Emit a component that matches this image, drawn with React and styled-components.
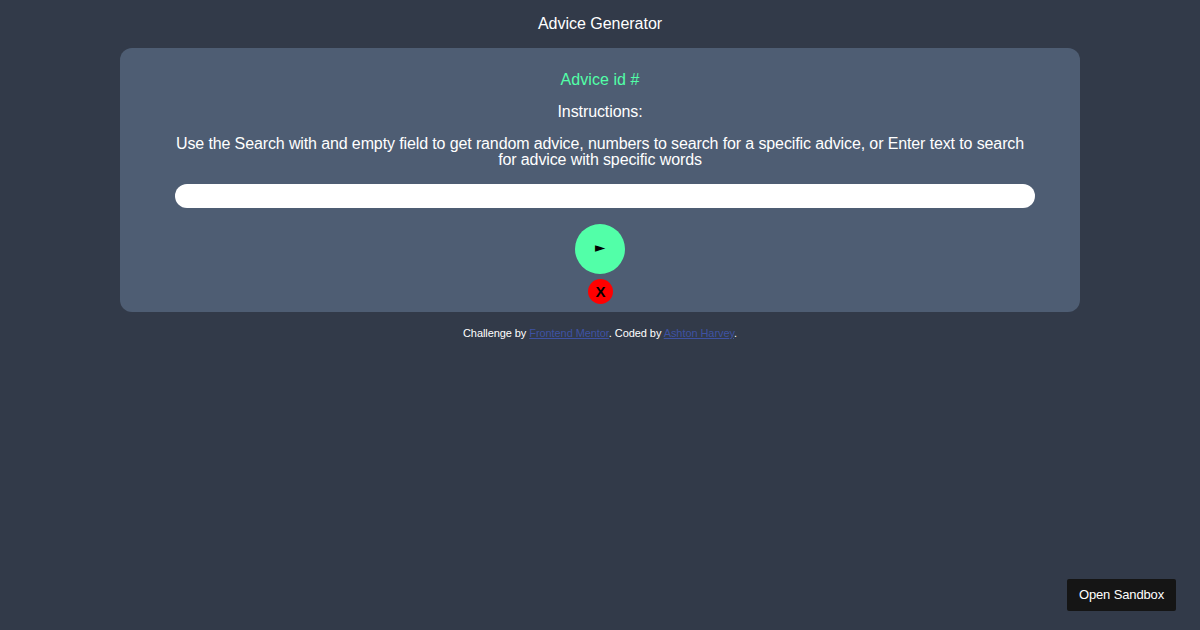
import React from "react";
import styled, { createGlobalStyle } from "styled-components";

const Global = createGlobalStyle`
  html, body { margin: 0; padding: 0; }
  body {
    background: hsl(217, 19%, 24%);
    color: #fff;
    font-family: "Liberation Sans", Arial, sans-serif;
    font-size: 16px;
    min-height: 630px;
  }
`;

const Page = styled.main`
  display: flex;
  flex-direction: column;
  align-items: center;
  min-height: 630px;
  padding-top: 15px;
  box-sizing: border-box;
`;

const Title = styled.h1`
  margin: 0 0 15px;
  font-size: 16px;
  line-height: 18px;
  font-weight: 400;
  letter-spacing: -0.02px;
`;

const Card = styled.section`
  width: 960px;
  height: 264px;
  box-sizing: border-box;
  padding: 23px 55px 0;
  border-radius: 12px;
  background: hsl(217, 19%, 38%);
  display: flex;
  flex-direction: column;
  align-items: stretch;
  text-align: center;
`;

const Line = styled.p`
  margin: 0 0 14px;
  font-size: 16px;
  line-height: 18px;
  letter-spacing: ${(p) => p.$spacing}px;
  color: ${(p) => (p.$accent ? "hsl(150, 100%, 66%)" : "#fff")};
`;

const Instructions = styled.p`
  margin: 1px 0 16px;
  font-size: 16px;
  line-height: 16px;
  letter-spacing: -0.12px;
`;

const SearchInput = styled.input`
  display: block;
  width: 860px;
  height: 24px;
  box-sizing: border-box;
  border: 0;
  border-radius: 12px;
  background: #fff;
  padding: 0 12px;
  margin-bottom: 16px;
`;

const RoundButton = styled.button`
  display: flex;
  align-items: center;
  justify-content: center;
  align-self: center;
  flex: none;
  border: 0;
  padding: 0 0 ${(p) => p.$lift}px;
  border-radius: 50%;
  color: #000;
  font-family: ${(p) => p.$family}, sans-serif;
  width: ${(p) => p.$size}px;
  height: ${(p) => p.$size}px;
  background: ${(p) => p.$bg};
  font-size: ${(p) => p.$font}px;
  font-weight: ${(p) => p.$weight};
`;

const ClearRow = styled.div`
  margin-top: 5px;
  display: flex;
  justify-content: center;
  padding-left: 1px;
`;

const Footer = styled.footer`
  margin-top: 15px;
  font-size: 11px;
  line-height: 13px;
  text-align: center;
  letter-spacing: -0.075px;
`;

const Link = styled.a`
  color: hsl(228, 45%, 44%);
  text-decoration: underline;
`;

const Sandbox = styled.button`
  position: absolute;
  right: 24px;
  bottom: 19px;
  width: 109px;
  height: 32px;
  border: 0;
  padding: 0 0 2px;
  border-radius: 2px;
  background: #151515;
  color: #fff;
  font-family: "Liberation Sans", Arial, sans-serif;
  font-size: 13px;
  letter-spacing: -0.14px;
`;

export default function App() {
  return (
    <>
      <Global />
      <Page>
        <Title>Advice Generator</Title>
        <Card>
          <Line $accent $spacing={0.06}>Advice id #</Line>
          <Line $spacing={-0.1}>Instructions:</Line>
          <Instructions>
            Use the Search with and empty field to get random advice, numbers to search for a specific advice, or Enter text to search for advice with specific words
          </Instructions>
          <SearchInput type="text" aria-label="Search" />
          <RoundButton $size={50} $lift={4} $font={13.33} $bg="hsl(150, 100%, 66%)" $family='"DejaVu Sans"' $weight={400}>►</RoundButton>
          <ClearRow>
            <RoundButton $size={25} $lift={0} $font={15} $bg="#ff0000" $family='"Liberation Sans"' $weight={700}>X</RoundButton>
          </ClearRow>
        </Card>
        <Footer>
          Challenge by <Link href="#">Frontend Mentor</Link>. Coded by <Link href="#">Ashton Harvey</Link>.
        </Footer>
        <Sandbox>Open Sandbox</Sandbox>
      </Page>
    </>
  );
}
